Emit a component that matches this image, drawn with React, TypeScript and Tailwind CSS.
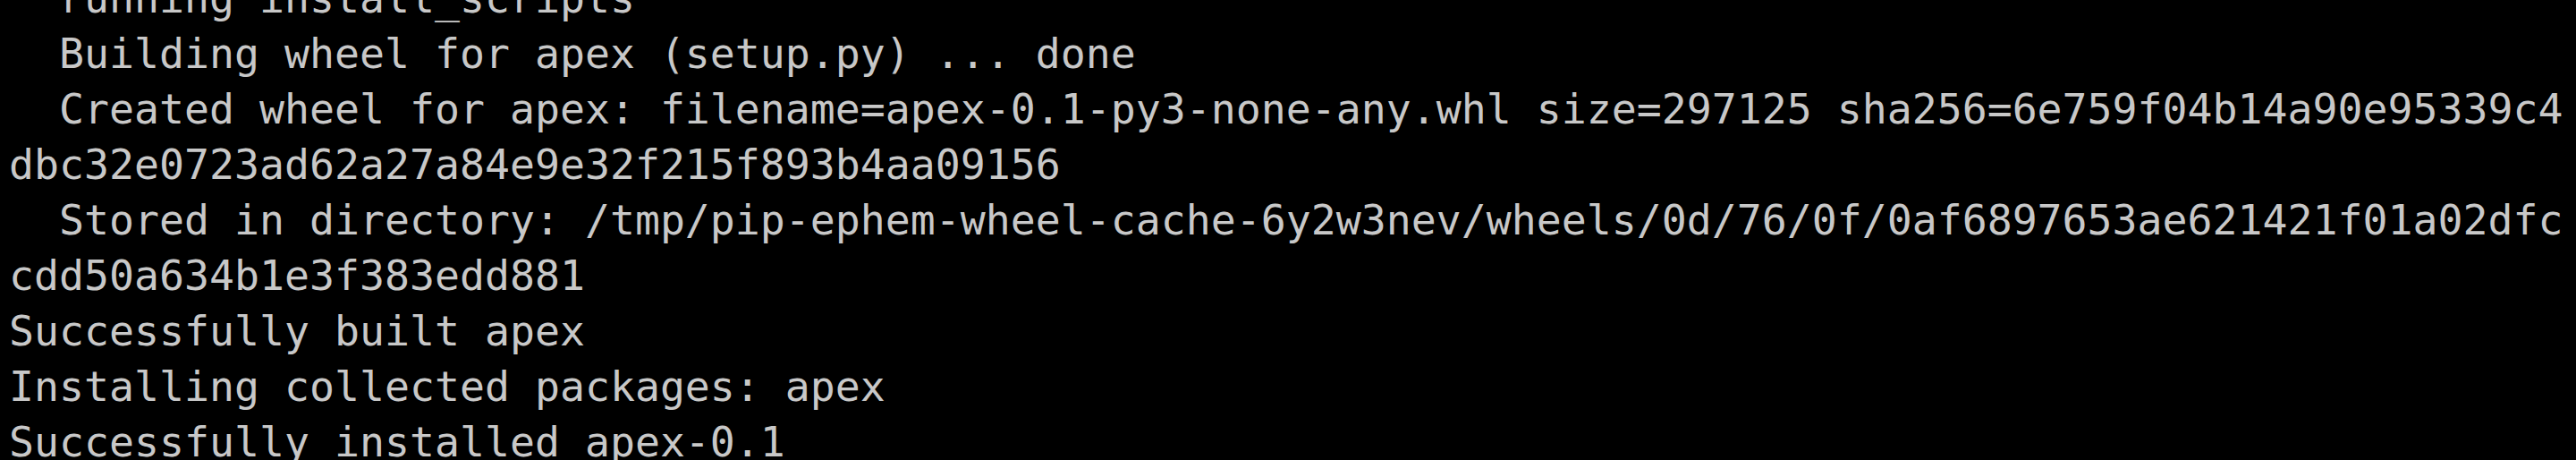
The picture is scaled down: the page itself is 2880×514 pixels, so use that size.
import React from 'react';

const lines: string[] = [
    '  running install_scripts',
    '  Building wheel for apex (setup.py) ... done',
    '  Created wheel for apex: filename=apex-0.1-py3-none-any.whl size=297125 sha256=6e759f04b14a90e95339c4',
    'dbc32e0723ad62a27a84e9e32f215f893b4aa09156',
    '  Stored in directory: /tmp/pip-ephem-wheel-cache-6y2w3nev/wheels/0d/76/0f/0af6897653ae621421f01a02dfc',
    'cdd50a634b1e3f383edd881',
    'Successfully built apex',
    'Installing collected packages: apex',
    'Successfully installed apex-0.1',
];

const App: React.FC = () => {
    return (
        <div className="h-[514px] w-full overflow-hidden bg-black">
            <div
                className="-mt-[33px] pl-[10px] text-[46.5px] leading-[62px] text-[#c8c8c8]"
                style={{ fontFamily: '"DejaVu Sans Mono", "Liberation Mono", monospace' }}
            >
                {lines.map((line, i) => (
                    <div key={i} className="whitespace-pre">
                        {line}
                    </div>
                ))}
            </div>
        </div>
    );
};

export default App;
